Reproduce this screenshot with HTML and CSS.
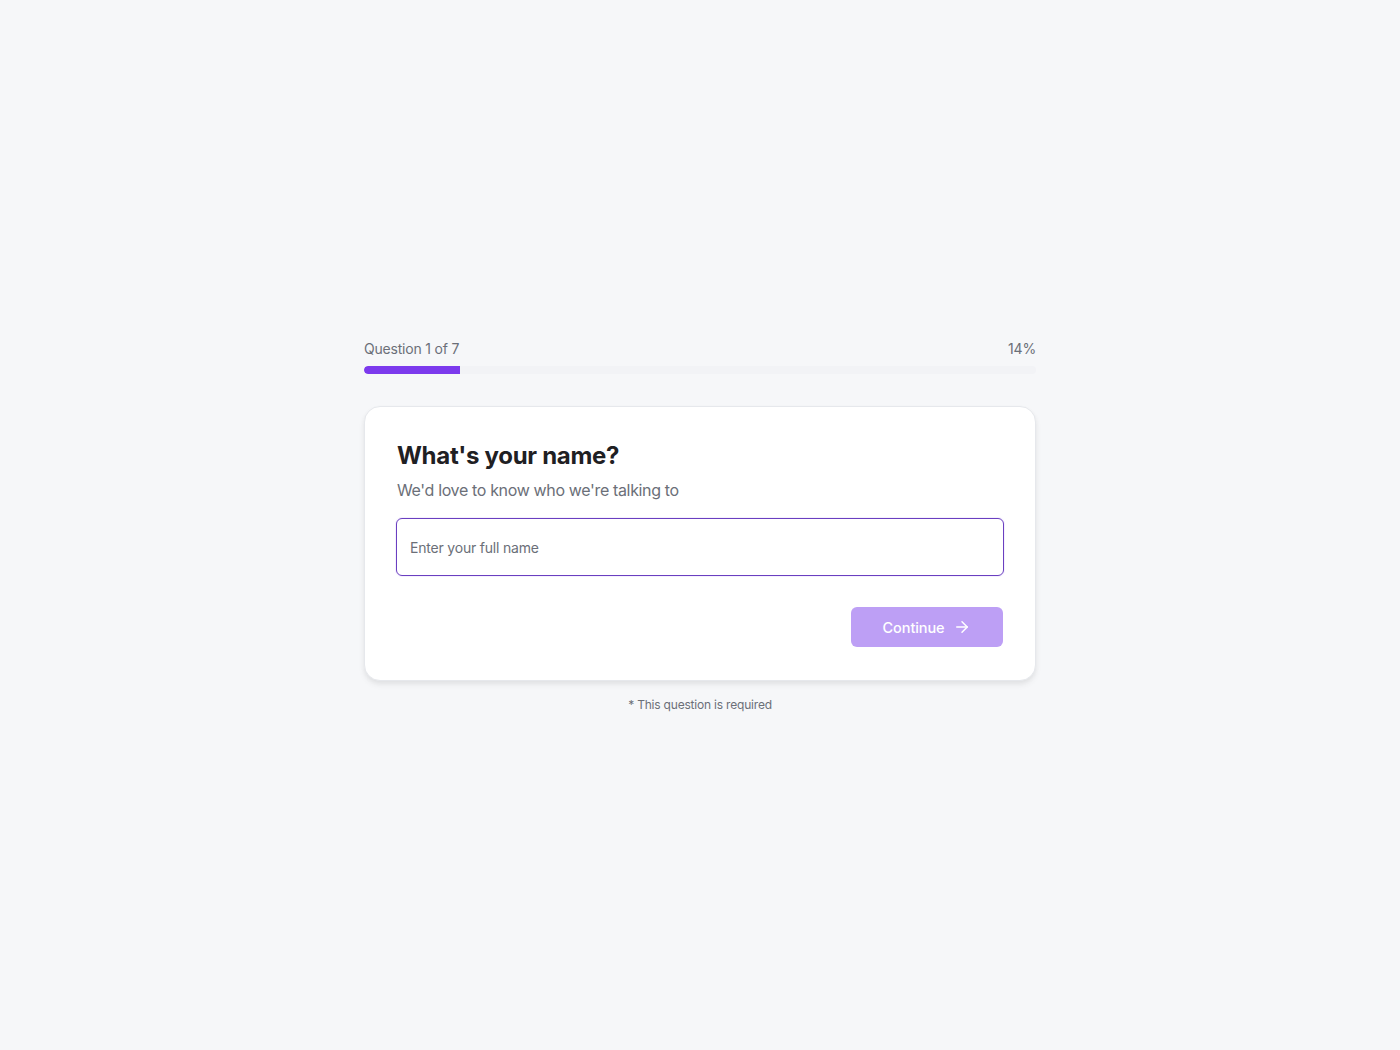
FILE: index.html
```html
<!DOCTYPE html>
<html lang="en">
<head>
    <meta charset="UTF-8">
    <title>Question 1 of 7</title>
    <link rel="stylesheet" href="styles.css">
</head>
<body>
    <div class="page">
        <div class="survey">
            <div class="progress-head">
                <span>Question 1 of 7</span>
                <span>14%</span>
            </div>
            <div class="progress-track">
                <div class="progress-bar" style="width: 14.28%"></div>
            </div>
            <div class="card">
                <h1 class="question">What's your name?</h1>
                <p class="hint">We'd love to know who we're talking to</p>
                <input class="answer" type="text" placeholder="Enter your full name">
                <div class="actions">
                    <button class="next" disabled>
                        Continue
                        <svg width="18" height="18" viewBox="0 0 24 24" fill="none" stroke="currentColor" stroke-width="2" stroke-linecap="round" stroke-linejoin="round"><path d="M5 12h14"/><path d="M12 5l7 7-7 7"/></svg>
                    </button>
                </div>
            </div>
            <p class="required">* This question is required</p>
        </div>
    </div>
</body>
</html>
```

FILE: styles.css
```css
body {
    margin: 0;
    font-family: 'Inter', 'Liberation Sans', sans-serif;
    background: #f6f7f9;
    color: #1f2023;
    letter-spacing: -0.2px;
}
.page {
    min-height: 100vh;
    box-sizing: border-box;
    padding-top: 4px;
    display: flex;
    align-items: center;
    justify-content: center;
}
.survey {
    width: 672px;
}
.progress-head {
    display: flex;
    justify-content: space-between;
    font-size: 14px;
    line-height: 16px;
    color: #6b6f78;
    margin-bottom: 9px;
}
.progress-track {
    height: 8px;
    background: #f2f3f6;
    border-radius: 4px;
    overflow: hidden;
    margin-bottom: 32px;
}
.progress-bar {
    height: 100%;
    background: #7c3aed;
    border-radius: 4px 0 0 4px;
}
.card {
    background: #fff;
    border: 1px solid #e6e8ec;
    border-radius: 16px;
    padding: 33px 32px 33px;
    box-shadow: 0 4px 6px rgba(0,0,0,0.06), 0 2px 4px rgba(0,0,0,0.04);
}
.question {
    margin: 0 0 6px;
    font-size: 24px;
    line-height: 32px;
    font-weight: 700;
    color: #1f2023;
    letter-spacing: -0.3px;
}
.hint {
    margin: 0 0 16px;
    font-size: 16px;
    line-height: 24px;
    color: #6b6f78;
    letter-spacing: -0.35px;
}
.answer {
    display: block;
    box-sizing: border-box;
    height: 58px;
    margin: 0 0 31px -1px;
    width: calc(100% + 2px);
    padding: 0 13px;
    border: 1px solid #6a3fc0;
    border-radius: 6px;
    font-family: inherit;
    font-size: 14px;
    letter-spacing: -0.2px;
    color: #1f2023;
    outline: none;
    box-shadow: 0 0 0 1px rgba(124,58,237,0.08);
}
.answer::placeholder {
    color: #6b6f78;
}
.actions {
    display: flex;
    justify-content: flex-end;
}
.next {
    width: 152px;
    height: 40px;
    display: flex;
    align-items: center;
    justify-content: center;
    gap: 9px;
    border: none;
    border-radius: 6px;
    background: #bd9ff5;
    color: #fff;
    font-family: inherit;
    font-size: 14.5px;
    font-weight: 500;
    letter-spacing: -0.1px;
}
.required {
    margin: 16px 0 0;
    text-align: center;
    font-size: 12px;
    line-height: 16px;
    color: #6b6f78;
}
```
